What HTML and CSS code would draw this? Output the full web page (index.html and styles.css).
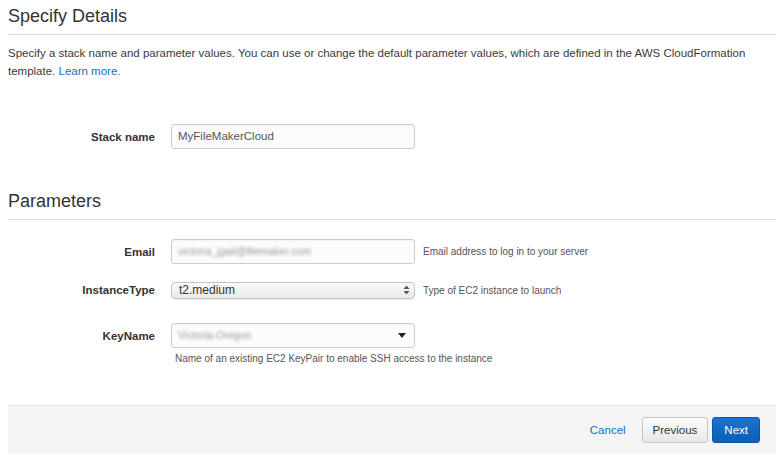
FILE: index.html
```html
<html>
    <head>
<link rel="stylesheet" href="styles.css">
    </head>
    <body>
        <div class="page">
            <h2 class="section-title">Specify Details</h2>
            <p class="intro">Specify a stack name and parameter values. You can use or change the default parameter values, which are defined in the AWS CloudFormation template. <a href="#" class="link">Learn more.</a></p>

            <div class="row row-stack">
                <label class="label">Stack name</label>
                <div class="input">MyFileMakerCloud</div>
            </div>

            <h2 class="section-title params-title">Parameters</h2>

            <div class="row row-email">
                <label class="label">Email</label>
                <div class="input"><span class="blurred">victoria_jgail@filemaker.com</span></div>
                <span class="help">Email address to log in to your server</span>
            </div>

            <div class="row row-type">
                <label class="label">InstanceType</label>
                <div class="select">
                    <span>t2.medium</span>
                    <svg class="updown" width="7" height="10" viewBox="0 0 7 10"><path d="M3.5 0.5 L6.5 4 L0.5 4 Z M3.5 9.5 L6.5 6 L0.5 6 Z" fill="#555"/></svg>
                </div>
                <span class="help">Type of EC2 instance to launch</span>
            </div>

            <div class="row row-key">
                <label class="label">KeyName</label>
                <div class="input dropdown">
                    <span class="blurred">Victoria-Oregon</span>
                    <svg class="caret" width="8" height="5" viewBox="0 0 8 5"><path d="M0 0 L8 0 L4 5 Z" fill="#222"/></svg>
                </div>
            </div>
            <div class="sub-help">Name of an existing EC2 KeyPair to enable SSH access to the instance</div>

            <div class="footer">
                <a href="#" class="cancel">Cancel</a>
                <button class="btn">Previous</button>
                <button class="btn btn-primary">Next</button>
            </div>
        </div>
    </body>
</html>
```

FILE: styles.css
```css
/* Base page */
body {
    margin: 0;
    font-family: "Liberation Sans", Arial, sans-serif;
    font-size: 11.5px;
    color: #3a3a3a;
    background: #fff;
}
.page {
    padding: 0 4px 0 8px;
}
/* Section headings with underline */
.section-title {
    margin: 0;
    padding: 4px 0 6px 0;
    font-size: 18px;
    line-height: 24px;
    font-weight: normal;
    color: #333;
    border-bottom: 1px solid #ddd;
}
.params-title {
    margin-top: 36px;
}
.intro {
    margin: 9px 0 0 0;
    line-height: 18px;
}
.link {
    color: #1a6bc4;
    text-decoration: none;
}
/* Form rows - label column, field, help text */
.row {
    display: flex;
    align-items: center;
}
.row-stack { margin-top: 44px; }
.row-email { margin-top: 19px; }
.row-type  { margin-top: 14px; height: 24px; }
.row-key   { margin-top: 21px; }
.label {
    width: 147px;
    margin-right: 16px;
    text-align: right;
    font-weight: bold;
    color: #333;
}
.input {
    box-sizing: border-box;
    width: 244px;
    height: 25px;
    padding: 0 6px;
    line-height: 23px;
    border: 1px solid #ccc;
    border-radius: 3px;
    background: #fcfcfc;
    color: #555;
    box-shadow: inset 0 1px 1px rgba(0,0,0,0.04);
}
.blurred {
    color: #999;
    filter: blur(1.4px);
    font-size: 10.5px;
}
.dropdown {
    display: flex;
    align-items: center;
    justify-content: space-between;
    padding-right: 8px;
}
.caret {
    display: block;
}
/* Mac style popup select */
.select {
    box-sizing: border-box;
    display: flex;
    align-items: center;
    justify-content: space-between;
    width: 244px;
    height: 17px;
    padding: 0 4px 0 7px;
    border: 1px solid #c4c4c4;
    border-radius: 4px;
    background: linear-gradient(#fafafa, #e9e9e9);
    box-shadow: 0 1px 1px rgba(0,0,0,0.08);
    color: #333;
    font-size: 12px;
}
.updown {
    display: block;
}
.help {
    margin-left: 8px;
    font-size: 10px;
    color: #555;
}
.sub-help {
    margin: 4px 0 0 167px;
    font-size: 10px;
    line-height: 14px;
    color: #555;
}
/* Footer action bar */
.footer {
    margin-top: 39px;
    height: 49px;
    box-sizing: border-box;
    padding: 0 16px 0 0;
    display: flex;
    align-items: center;
    justify-content: flex-end;
    background: #f4f4f4;
    border-top: 1px solid #e6e6e6;
}
.cancel {
    margin-right: 12px;
    color: #1a6bc4;
    text-decoration: none;
}
.btn {
    box-sizing: border-box;
    height: 26px;
    padding: 0 10px;
    margin-left: 4px;
    font-family: "Liberation Sans", Arial, sans-serif;
    font-size: 11.5px;
    color: #333;
    border: 1px solid #c6c6c6;
    border-radius: 3px;
    background: linear-gradient(#fdfdfd, #e7e7e7);
}
.btn-primary {
    padding: 0 11px;
    color: #fff;
    border-color: #0a55a6;
    background: linear-gradient(#1b73cc, #0a5fb6);
}
```
